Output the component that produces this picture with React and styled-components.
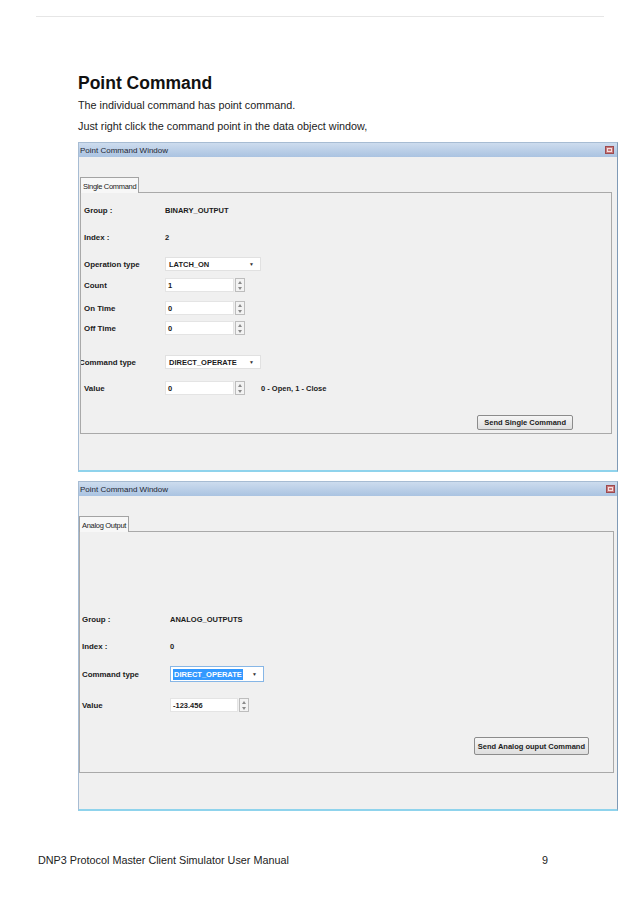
import React from "react";
import styled, { createGlobalStyle } from "styled-components";

const GlobalStyle = createGlobalStyle`
  html, body {
    margin: 0;
    background: #ffffff;
    font-family: "Liberation Sans", Arial, sans-serif;
  }
  * { box-sizing: border-box; }
`;

const Page = styled.div`
  width: 638px;
  padding-top: 16px;
`;

const TopRule = styled.hr`
  margin: 0 34px 0 36px;
  border: none;
  border-top: 1px solid #e6e6e6;
`;

const Main = styled.main`
  padding: 0 20px 0 78px;
`;

const Heading = styled.h1`
  margin: 56px 0 0;
  font-size: 17.5px;
  line-height: 21px;
  font-weight: 700;
  color: #111;
`;

const Para = styled.p`
  margin: ${(p) => p.$top}px 0 0;
  font-size: 10.8px;
  line-height: 14px;
  color: #222;
`;

const Window = styled.section`
  margin-top: ${(p) => p.$top}px;
  display: flex;
  flex-direction: column;
  background: #f0f0f0;
  border: 1px solid #a7bcd3;
  border-right-color: #7f9ab6;
  border-bottom: 2px solid #8fd3ec;
  font-family: "Liberation Sans", Tahoma, sans-serif;
  color: #1b1b1b;
`;

const TitleBar = styled.div`
  height: 14px;
  display: flex;
  align-items: center;
  justify-content: space-between;
  padding: 0 ${(p) => p.$right}px 0 1px;
  background: linear-gradient(#cddcee, #aac3e1);
  font-size: 8px;
  color: #1e2633;
`;

const CloseBox = styled.span`
  width: 9px;
  height: 8px;
  background: #c97a7c;
  border: 1px solid #9c4a4e;
  display: flex;
  align-items: center;
  justify-content: center;
  &::after {
    content: "";
    width: 3px;
    height: 2px;
    border: 1px solid #f4dede;
  }
`;

const Body = styled.div`
  padding: 20px ${(p) => p.$right}px 36px ${(p) => p.$left}px;
  display: flex;
  flex-direction: column;
`;

const Tabs = styled.div`
  display: flex;
  margin-bottom: -1px;
  position: relative;
  z-index: 1;
`;

const Tab = styled.div`
  height: 16px;
  padding: 4px 2px 0 2px;
  border: 1px solid #a3a3a3;
  border-bottom: none;
  background: #f7f7f7;
  font-size: 7.5px;
  letter-spacing: -0.3px;
  color: #222;
`;

const Panel = styled.div`
  height: ${(p) => p.$height}px;
  border: 1px solid #a9a9a9;
  overflow: hidden;
  display: flex;
  flex-direction: column;
  padding: ${(p) => p.$top}px 0 0 ${(p) => p.$left}px;
`;

const Row = styled.div`
  display: grid;
  grid-template-columns: ${(p) => p.$label}px auto auto 1fr;
  align-items: center;
  min-height: 14px;
  margin-top: ${(p) => p.$gap || 0}px;
  font-size: 7.5px;
  font-weight: 700;
`;

const Label = styled.span`
  margin-left: ${(p) => (p.$clip ? -5 : 0)}px;
  font-size: 7.9px;
  white-space: nowrap;
`;

const Value = styled.span`
  white-space: nowrap;
`;

const Select = styled.div`
  width: ${(p) => p.$width}px;
  height: ${(p) => p.$height}px;
  background: #fff;
  border: 1px solid ${(p) => (p.$focus ? "#86b6e6" : "#e1e1e1")};
  display: flex;
  align-items: center;
  justify-content: space-between;
  padding: 0 6px 0 2px;
`;

const Picked = styled.span`
  padding: 1px 1px;
  background: ${(p) => (p.$hl ? "#3399ff" : "transparent")};
  color: ${(p) => (p.$hl ? "#fff" : "inherit")};
`;

const Caret = styled.span`
  font-size: 5px;
  color: #333;
`;

const Spin = styled.div`
  display: flex;
  align-items: stretch;
  height: 14px;
`;

const SpinField = styled.div`
  width: ${(p) => p.$width}px;
  background: #fff;
  border: 1px solid #e4e4e4;
  display: flex;
  align-items: center;
  padding-left: 2px;
`;

const SpinButtons = styled.div`
  width: 10px;
  margin-left: 1px;
  border: 1px solid #bdbdbd;
  background: #f3f3f3;
  display: flex;
  flex-direction: column;
  align-items: center;
  justify-content: space-around;
`;

const Hint = styled.span`
  margin-left: 16px;
  white-space: nowrap;
`;

const ButtonRow = styled.div`
  margin-top: auto;
  display: flex;
  justify-content: flex-end;
  padding: 0 ${(p) => p.$right}px ${(p) => p.$bottom}px 0;
`;

const Button = styled.button`
  height: ${(p) => p.$height}px;
  padding: 0 ${(p) => p.$pad}px;
  border: 1px solid #8c8c8c;
  border-radius: 2px;
  background: linear-gradient(#f6f6f6, #dedede);
  font-family: "Liberation Sans", Tahoma, sans-serif;
  font-size: 7.5px;
  font-weight: 700;
  color: #1b1b1b;
`;

const Footer = styled.footer`
  margin-top: 43px;
  padding: 0 90px 0 38px;
  display: flex;
  justify-content: space-between;
  font-size: 10.8px;
  line-height: 13px;
  color: #222;
`;

function Arrows() {
  return (
    <>
      <svg width="4" height="3" viewBox="0 0 4 3">
        <path d="M0 3 L2 0 L4 3 Z" fill="#8a8a8a" />
      </svg>
      <svg width="4" height="3" viewBox="0 0 4 3">
        <path d="M0 0 L2 3 L4 0 Z" fill="#8a8a8a" />
      </svg>
    </>
  );
}

function SpinBox({ value, width }) {
  return (
    <Spin>
      <SpinField $width={width}>{value}</SpinField>
      <SpinButtons>
        <Arrows />
      </SpinButtons>
    </Spin>
  );
}

function Combo({ value, width, height, focus }) {
  return (
    <Select $width={width} $height={height} $focus={focus}>
      <Picked $hl={focus}>{value}</Picked>
      <Caret>▼</Caret>
    </Select>
  );
}

function WindowTitle({ right }) {
  return (
    <TitleBar $right={right}>
      <span>Point Command Window</span>
      <CloseBox />
    </TitleBar>
  );
}

export default function App() {
  return (
    <Page>
      <GlobalStyle />
      <TopRule />
      <Main>
        <Heading>Point Command</Heading>
        <Para $top={4}>The individual command has point command.</Para>
        <Para $top={7}>Just right click the command point in the data object window,</Para>

        <Window $top={9}>
          <WindowTitle right={3} />
          <Body $left={1} $right={5}>
            <Tabs>
              <Tab>Single Command</Tab>
            </Tabs>
            <Panel $height={242} $top={10} $left={3}>
              <Row $label={81}>
                <Label>Group :</Label>
                <Value>BINARY_OUTPUT</Value>
              </Row>
              <Row $label={81} $gap={13}>
                <Label>Index :</Label>
                <Value>2</Value>
              </Row>
              <Row $label={81} $gap={13}>
                <Label>Operation type</Label>
                <Combo value="LATCH_ON" width={96} height={14} />
              </Row>
              <Row $label={81} $gap={7}>
                <Label>Count</Label>
                <SpinBox value="1" width={69} />
              </Row>
              <Row $label={81} $gap={9}>
                <Label>On Time</Label>
                <SpinBox value="0" width={69} />
              </Row>
              <Row $label={81} $gap={6}>
                <Label>Off Time</Label>
                <SpinBox value="0" width={69} />
              </Row>
              <Row $label={81} $gap={20}>
                <Label $clip>Command type</Label>
                <Combo value="DIRECT_OPERATE" width={96} height={14} />
              </Row>
              <Row $label={81} $gap={12}>
                <Label>Value</Label>
                <SpinBox value="0" width={69} />
                <Hint>0 - Open, 1 - Close</Hint>
              </Row>
              <ButtonRow $right={38} $bottom={3}>
                <Button $height={15} $pad={6}>Send Single Command</Button>
              </ButtonRow>
            </Panel>
          </Body>
        </Window>

        <Window $top={9}>
          <WindowTitle right={2} />
          <Body $left={0} $right={3}>
            <Tabs>
              <Tab>Analog Output</Tab>
            </Tabs>
            <Panel $height={242} $top={80} $left={2}>
              <Row $label={88}>
                <Label>Group :</Label>
                <Value>ANALOG_OUTPUTS</Value>
              </Row>
              <Row $label={88} $gap={13}>
                <Label>Index :</Label>
                <Value>0</Value>
              </Row>
              <Row $label={88} $gap={13}>
                <Label>Command type</Label>
                <Combo value="DIRECT_OPERATE" width={94} height={16} focus />
              </Row>
              <Row $label={88} $gap={16}>
                <Label>Value</Label>
                <SpinBox value="-123.456" width={68} />
              </Row>
              <ButtonRow $right={24} $bottom={17}>
                <Button $height={18} $pad={3}>Send Analog ouput Command</Button>
              </ButtonRow>
            </Panel>
          </Body>
        </Window>
      </Main>
      <Footer>
        <span>DNP3 Protocol Master Client Simulator User Manual</span>
        <span>9</span>
      </Footer>
    </Page>
  );
}
